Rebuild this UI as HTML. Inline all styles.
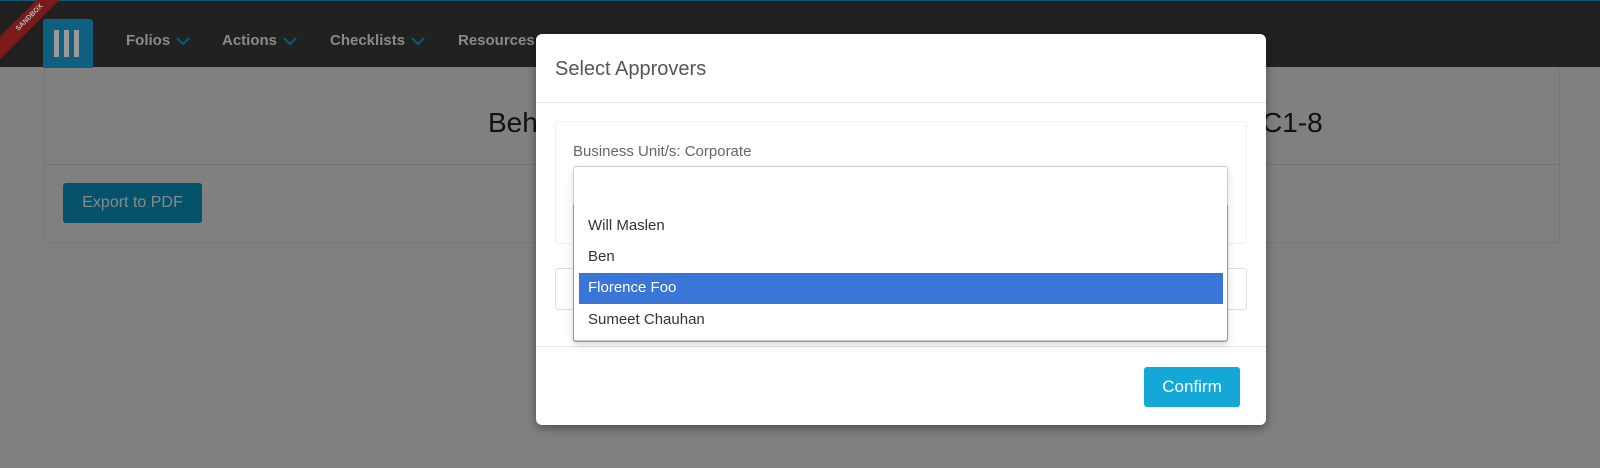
<!DOCTYPE html>
<html><head><style>
*{box-sizing:border-box;margin:0;padding:0}
body{width:1600px;height:468px;background:#808080;font-family:"Liberation Sans",sans-serif;position:relative;overflow:hidden}
.abs{position:absolute}
.nav{color:#8a8a8a;font-weight:bold;font-size:15px;top:32px}
.nav svg{vertical-align:middle;margin-left:6px}
</style></head><body>
<div class="abs" style="left:0;top:0;width:1600px;height:1px;background:#0b5a7a"></div>
<div class="abs" style="left:0;top:1px;width:1600px;height:66px;background:#212121"></div>
<div class="abs" style="left:-20px;top:10px;width:100px;height:16px;background:#7a1a1a;transform:rotate(-45deg);color:#bbb;font-size:7px;font-weight:bold;text-align:center;line-height:16px">SANDBOX</div>
<div class="abs" style="left:43px;top:19px;width:50px;height:49px;background:#0f5f80;border-radius:3px 3px 0 0"></div>
<div class="abs" style="left:54px;top:30px;width:5px;height:27px;background:#999"></div>
<div class="abs" style="left:64px;top:30px;width:5px;height:27px;background:#999"></div>
<div class="abs" style="left:74px;top:30px;width:5px;height:27px;background:#999"></div>
<div class="abs nav" style="left:126px">Folios<svg width="14" height="9"><path d="M1 1l6 6 6-6" fill="none" stroke="#0b5a7a" stroke-width="2"/></svg></div>
<div class="abs nav" style="left:222px">Actions<svg width="14" height="9"><path d="M1 1l6 6 6-6" fill="none" stroke="#0b5a7a" stroke-width="2"/></svg></div>
<div class="abs nav" style="left:330px">Checklists<svg width="14" height="9"><path d="M1 1l6 6 6-6" fill="none" stroke="#0b5a7a" stroke-width="2"/></svg></div>
<div class="abs nav" style="left:458px">Resources</div>
<div class="abs" style="left:44px;top:68px;width:1516px;height:175px;border:1px solid #777;border-top:none;border-radius:0 0 3px 3px"></div>
<div class="abs" style="left:44px;top:164px;width:1516px;height:1px;background:#747474"></div>
<div class="abs" style="left:488px;top:107px;font-size:28px;color:#111">Beh</div>
<div class="abs" style="left:1262px;top:107px;font-size:28px;color:#111">C1-8</div>
<div class="abs" style="left:63px;top:183px;width:139px;height:40px;background:#05536b;border-radius:3px;color:#8a8a8a;font-size:16px;line-height:40px;text-align:center">Export to PDF</div>
<div class="abs" style="left:536px;top:34px;width:730px;height:391px;background:#fff;border-radius:6px;box-shadow:0 3px 10px rgba(0,0,0,.4)">
 <div class="abs" style="left:19px;top:24px;font-size:20px;color:#555">Select Approvers</div>
 <div class="abs" style="left:0;top:68px;width:730px;height:1px;background:#e5e5e5"></div>
 <div class="abs" style="left:19px;top:87px;width:692px;height:123px;border:1px solid #eef0f3;border-radius:3px"></div>
 <div class="abs" style="left:37px;top:109px;font-size:15px;color:#666">Business Unit/s: Corporate</div>
 <div class="abs" style="left:19px;top:234px;width:692px;height:42px;border:1px solid #ddd;border-radius:3px"></div>
 <div class="abs" style="left:0;top:312px;width:730px;height:1px;background:#e5e5e5"></div>
 <div class="abs" style="left:37px;top:132px;width:655px;height:175px;border:1px solid #ccc;border-radius:3px;background:#fff;box-shadow:0 4px 8px rgba(0,0,0,.15)">
  <div class="abs" style="left:-1px;top:38px;width:655px;height:137px;border:1px solid #6a9be8;border-top:none;border-radius:0 0 3px 3px"></div>
  <div class="abs" style="left:14px;top:50px;font-size:15px;color:#333">Will Maslen</div>
  <div class="abs" style="left:14px;top:81px;font-size:15px;color:#333">Ben</div>
  <div class="abs" style="left:5px;top:106px;width:644px;height:31px;background:#3a76d8"></div>
  <div class="abs" style="left:14px;top:112px;font-size:15px;color:#fff">Florence Foo</div>
  <div class="abs" style="left:14px;top:144px;font-size:15px;color:#333">Sumeet Chauhan</div>
 </div>
 <div class="abs" style="left:608px;top:333px;width:96px;height:40px;background:#13a8d8;border-radius:3px;color:#fff;font-size:17px;line-height:40px;text-align:center">Confirm</div>
</div>
</body></html>
